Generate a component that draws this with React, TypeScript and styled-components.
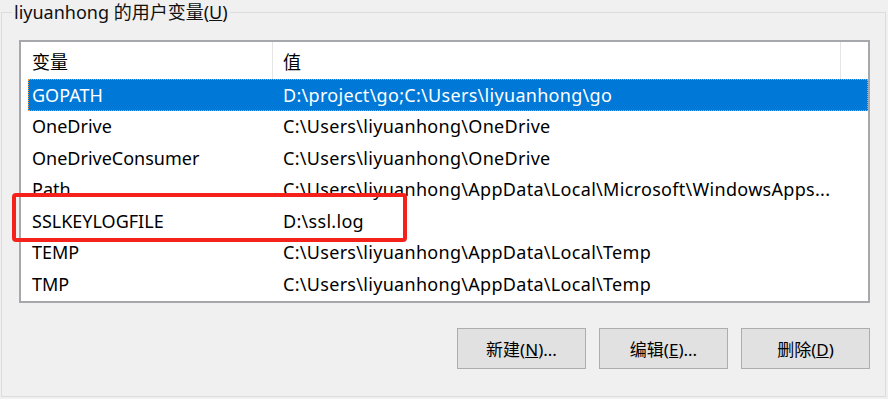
import React from "react";
import styled, { createGlobalStyle } from "styled-components";

const Global = createGlobalStyle`
  html, body { margin: 0; padding: 0; background: #f0f0f0; }
  body { font-family: "Noto Sans", "Noto Sans CJK SC", sans-serif; color: #000; }
  * { box-sizing: border-box; }
`;

const Page = styled.div`
  position: relative;
  width: 888px;
  height: 399px;
  overflow: hidden;
  background: #f0f0f0;
`;

const Group = styled.fieldset`
  margin: 0 0 0 1px;
  width: 885px;
  padding: 0 15px 27px 17px;
  border: 1px solid #dcdcdc;
  min-width: 0;
`;

const Legend = styled.legend`
  margin-left: -7px;
  padding: 0 2px;
  font-size: 18px;
  line-height: 24px;
  color: #111;
  white-space: nowrap;
`;

const Body = styled.div`
  padding-top: 16px;
  display: flex;
  flex-direction: column;
`;

const List = styled.div`
  width: 851px;
  height: 263px;
  border: 2px solid #a6a8ac;
  background: #fff;
  padding-left: 7px;
  display: flex;
  flex-direction: column;
`;

const Cols = styled.div`
  display: grid;
  grid-template-columns: 245px 568px;
`;

const Header = styled(Cols)`
  height: 37px;
`;

const HeadCell = styled.div<{ $value?: boolean }>`
  display: flex;
  align-items: center;
  padding-left: ${(p) => (p.$value ? "10px" : "4px")};
  border-right: 1px solid #e5e5e5;
  font-size: 18px;
`;

const Row = styled(Cols)<{ $selected?: boolean }>`
  height: 31.5px;
  align-items: center;
  font-size: 18px;
  white-space: nowrap;
  background: ${(p) => (p.$selected ? "#0078d7" : "transparent")};
  color: ${(p) => (p.$selected ? "#fff" : "#000")};
  outline: ${(p) => (p.$selected ? "1px dotted #f59a3c" : "none")};
  outline-offset: -1px;
`;

const Cell = styled.div`
  padding-left: 4px;
  overflow: hidden;
`;

const ValueCell = styled(Cell)`
  padding-left: 10px;
  letter-spacing: 0.3px;
`;

const Buttons = styled.div`
  margin-top: 25px;
  display: flex;
  justify-content: flex-end;
  gap: 13px;
`;

const Button = styled.button`
  width: 129px;
  height: 41px;
  background: #e1e1e1;
  border: 1px solid #adadad;
  font-family: "Noto Sans", "Noto Sans CJK SC", sans-serif;
  font-size: 17px;
  color: #000;
  padding: 0;
`;

const Annotation = styled.div`
  position: absolute;
  left: 12px;
  top: 193px;
  width: 395px;
  height: 49px;
  border: 4px solid #f5221b;
  border-radius: 4px;
  pointer-events: none;
`;

const rows = [
  { name: "GOPATH", value: "D:\\project\\go;C:\\Users\\liyuanhong\\go", selected: true },
  { name: "OneDrive", value: "C:\\Users\\liyuanhong\\OneDrive" },
  { name: "OneDriveConsumer", value: "C:\\Users\\liyuanhong\\OneDrive" },
  { name: "Path", value: "C:\\Users\\liyuanhong\\AppData\\Local\\Microsoft\\WindowsApps..." },
  { name: "SSLKEYLOGFILE", value: "D:\\ssl.log" },
  { name: "TEMP", value: "C:\\Users\\liyuanhong\\AppData\\Local\\Temp" },
  { name: "TMP", value: "C:\\Users\\liyuanhong\\AppData\\Local\\Temp" },
];

export default function App() {
  return (
    <Page>
      <Global />
      <Group>
        <Legend>
          liyuanhong 的用户变量(<u>U</u>)
        </Legend>
        <Body>
          <List>
            <Header>
              <HeadCell>变量</HeadCell>
              <HeadCell $value>值</HeadCell>
            </Header>
            {rows.map((r) => (
              <Row key={r.name} $selected={r.selected}>
                <Cell>{r.name}</Cell>
                <ValueCell>{r.value}</ValueCell>
              </Row>
            ))}
          </List>
          <Buttons>
            <Button>
              新建(<u>N</u>)...
            </Button>
            <Button>
              编辑(<u>E</u>)...
            </Button>
            <Button>
              删除(<u>D</u>)
            </Button>
          </Buttons>
        </Body>
      </Group>
      <Annotation />
    </Page>
  );
}
